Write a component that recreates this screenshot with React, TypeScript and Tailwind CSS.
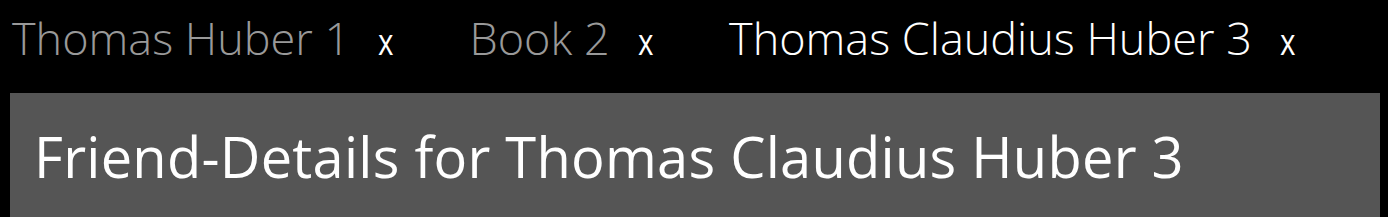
import React from 'react';

const tabs = [
  { title: 'Thomas Huber 1', active: false },
  { title: 'Book 2', active: false },
  { title: 'Thomas Claudius Huber 3', active: true },
];

export default function App() {
  return (
    <div
      className="w-[1388px] h-[217px] bg-black overflow-hidden"
      style={{ fontFamily: '"Open Sans", "Noto Sans", sans-serif' }}
    >
      {/* tab headers */}
      <div className="flex h-[93px] pl-[12px] pt-[8px] whitespace-nowrap">
        {tabs.map((t) => (
          <div key={t.title} className="flex shrink-0 items-baseline pr-[72px] h-[60px]">
            <span
              className={`text-[45px] font-light leading-[60px] ${
                t.active ? 'text-white' : 'text-[#999999]'
              }`}
            >
              {t.title}
            </span>
            <span className="ml-[28px] text-[37px] leading-[60px] text-white inline-block scale-x-[0.8] origin-left">
              x
            </span>
          </div>
        ))}
      </div>

      {/* content */}
      <div className="ml-[10px] mr-[8px] h-[124px] bg-[#555555] pl-[24px] pt-[26px]">
        <h1 className="text-[56px] leading-[74px] text-white tracking-[0.25px] whitespace-nowrap">
          Friend-Details for Thomas Claudius Huber 3
        </h1>
      </div>
    </div>
  );
}
